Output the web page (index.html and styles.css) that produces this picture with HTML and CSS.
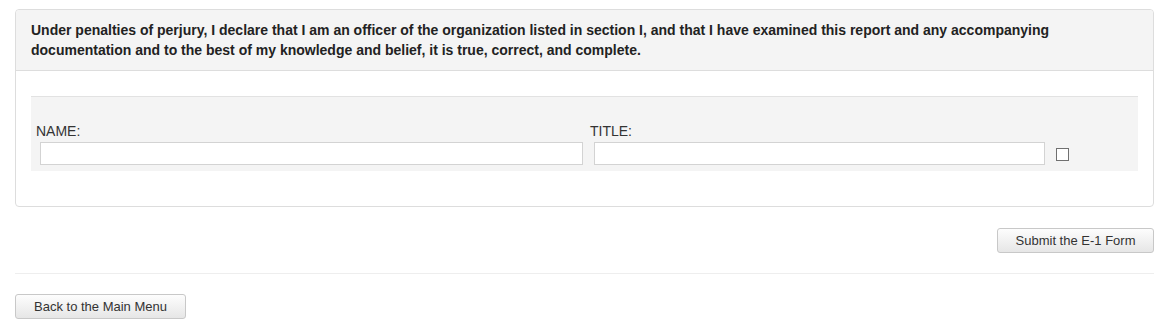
FILE: index.html
```html
<html>
<head>
	<link rel="stylesheet" href="styles.css">
	<title>E-1 Form Certification</title>
</head>
<body>
	<div class="page">
		<div class="panel">
			<div class="panel-heading">
				Under penalties of perjury, I declare that I am an officer of the organization listed in section I, and that I have examined this report and any accompanying documentation and to the best of my knowledge and belief, it is true, correct, and complete.
			</div>
			<div class="panel-body">
				<div class="sign">
					<div class="field name">
						<label for="signName">NAME:</label>
						<input type="text" id="signName" />
					</div>
					<div class="field title">
						<label for="signTitle">TITLE:</label>
						<input type="text" id="signTitle" />
					</div>
					<div class="check">
						<input type="checkbox" id="signAgree" />
					</div>
				</div>
			</div>
		</div>
		<div class="actions">
			<button class="btn">Submit the E-1 Form</button>
		</div>
		<hr>
		<div class="back">
			<button class="btn">Back to the Main Menu</button>
		</div>
	</div>
</body>
</html>
```

FILE: styles.css
```css
body {
	margin: 0;
	font-family: "Liberation Sans", Arial, sans-serif;
	font-size: 13px;
	color: #333;
	background: #fff;
}
.page {
	padding: 9px 7px 0 15px;
}
.panel {
	border: 1px solid #ddd;
	border-radius: 4px;
}
.panel-heading {
	background-color: #f4f4f4;
	border-bottom: 1px solid #ddd;
	border-radius: 4px 4px 0 0;
	padding: 10px 15px;
	font-size: 14px;
	font-weight: bold;
	line-height: 20px;
	color: #222;
}
.panel-body {
	padding: 25px 15px 35px 15px;
}
.sign {
	display: flex;
	align-items: flex-end;
	background-color: #f4f4f4;
	border-top: 1px solid #e2e2e2;
	padding: 27px 0 6px 0;
}
.field label {
	display: block;
	padding-left: 5px;
	font-size: 14px;
	line-height: 15px;
	margin-bottom: 3px;
}
.field input {
	display: block;
	margin-left: 9px;
	height: 23px;
	border: 1px solid #d3d3d3;
	background: #fff;
	padding: 0 4px;
	box-sizing: border-box;
}
.name {
	width: 554px;
}
.name input {
	width: 543px;
}
.title input {
	width: 451px;
}
.check {
	padding: 0 0 4px 11px;
}
.check input {
	-webkit-appearance: none;
	appearance: none;
	display: block;
	margin: 0;
	width: 13px;
	height: 13px;
	border: 1px solid #707070;
	background: #fff;
	border-radius: 0;
}
.actions {
	text-align: right;
	margin-top: 21px;
}
.btn {
	font-family: "Liberation Sans", Arial, sans-serif;
	font-size: 13px;
	color: #333;
	height: 25px;
	padding: 0 10px;
	border: 1px solid #c8c8c8;
	border-radius: 3px;
	background: linear-gradient(#fdfdfd, #e6e6e6);
}
.actions .btn {
	width: 157px;
}
.back .btn {
	width: 171px;
}
hr {
	border: 0;
	border-top: 1px solid #eee;
	margin: 20px 0 20px 0;
}
```
